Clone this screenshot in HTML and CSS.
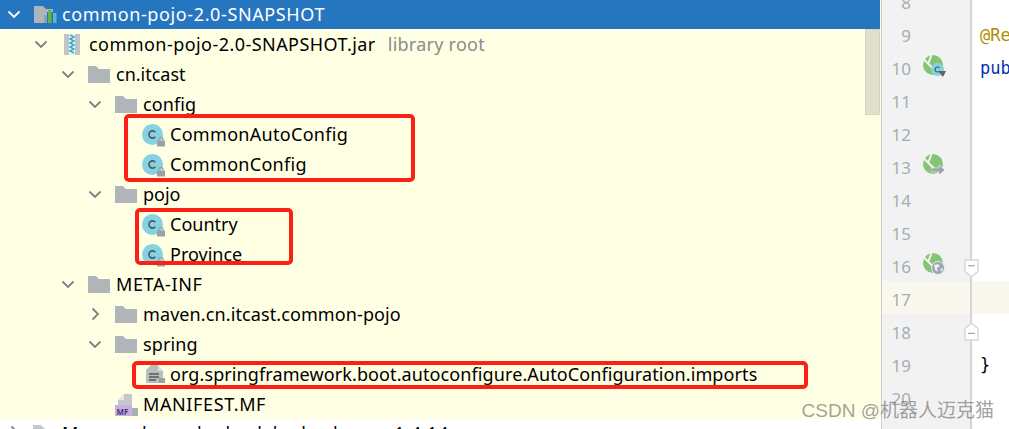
FILE: index.html
```html
<!DOCTYPE html>
<html lang="zh-CN">
<head>
    <meta charset="UTF-8">
    <title>common-pojo</title>
    <link rel="stylesheet" href="styles.css">
</head>
<body>
    <svg class="defs" width="0" height="0">
        <symbol id="folder" viewBox="0 0 22 17">
            <path d="M0 0h8l3 3h11v14H0z" fill="#afb5b8"/>
        </symbol>
        <symbol id="arrow-down" viewBox="0 0 14 14">
            <path d="M1.5 4.5 7 10l5.5-5.5" fill="none" stroke="currentColor" stroke-width="1.8"/>
        </symbol>
        <symbol id="arrow-right" viewBox="0 0 14 14">
            <path d="M4.5 1.5 10 7l-5.5 5.5" fill="none" stroke="currentColor" stroke-width="1.8"/>
        </symbol>
        <symbol id="class-lock" viewBox="0 0 24 24">
            <circle cx="10.5" cy="10.5" r="10.5" fill="#86d2e2"/>
            <path d="M13.3 8.2a3.6 3.6 0 1 0 0 4.6" fill="none" stroke="#4b5a63" stroke-width="1.6"/>
            <path d="M17 16.5v-1.2a2 2 0 0 1 4 0v1.2" fill="none" stroke="#9aa1a6" stroke-width="1.3"/>
            <rect x="15" y="16.5" width="8" height="6" fill="#9aa1a6"/>
        </symbol>
        <symbol id="spring" viewBox="0 0 20 20">
            <circle cx="10" cy="10" r="10" fill="#84c473"/>
            <path d="M0 3.500l13 13M8.500 0 5.500 8" fill="none" stroke="#f4f4f4" stroke-width="2"/>
        </symbol>
    </svg>

    <div class="window">
        <!-- 左侧项目树 -->
        <div class="tree">
            <div class="row selected lvl0">
                <svg class="arrow"><use href="#arrow-down"/></svg>
                <svg class="icon lib" viewBox="0 0 23 17">
                    <path d="M0 0h9l3 3h7v3h-6v11H0z" fill="#afb5b8"/>
                    <rect x="10" y="9" width="3" height="8" fill="#8fa3ad"/>
                    <rect x="14" y="4" width="3.500" height="13" fill="#62b543"/>
                    <rect x="19" y="7" width="3.500" height="10" fill="#5bb4d6"/>
                </svg>
                <span class="caps">common-pojo-2.0-SNAPSHOT</span>
            </div>
            <div class="row lvl1">
                <svg class="arrow"><use href="#arrow-down"/></svg>
                <svg class="icon jar" viewBox="0 0 16 21">
                    <rect width="16" height="21" fill="#c0c6c6"/>
                    <rect x="5" width="6" height="21" fill="#e9f5f5"/>
                    <path d="M6 1l4 2-4 2 4 2-4 2 4 2-4 2 4 2-4 2 4 2" fill="none" stroke="#3fa7c9" stroke-width="1.4"/>
                </svg>
                <span class="jar-name">common-pojo-2.0-SNAPSHOT.jar</span>
                <span class="hint">library root</span>
            </div>
            <div class="row lvl2">
                <svg class="arrow"><use href="#arrow-down"/></svg>
                <svg class="icon folder"><use href="#folder"/></svg>
                <span>cn.itcast</span>
            </div>
            <div class="row lvl3">
                <svg class="arrow"><use href="#arrow-down"/></svg>
                <svg class="icon folder"><use href="#folder"/></svg>
                <span class="lower">config</span>
            </div>
            <div class="row lvl4">
                <svg class="icon cls"><use href="#class-lock"/></svg>
                <span class="mixed">CommonAutoConfig</span>
            </div>
            <div class="row lvl4">
                <svg class="icon cls"><use href="#class-lock"/></svg>
                <span class="mixed">CommonConfig</span>
            </div>
            <div class="row lvl3">
                <svg class="arrow"><use href="#arrow-down"/></svg>
                <svg class="icon folder"><use href="#folder"/></svg>
                <span>pojo</span>
            </div>
            <div class="row lvl4">
                <svg class="icon cls"><use href="#class-lock"/></svg>
                <span>Country</span>
            </div>
            <div class="row lvl4">
                <svg class="icon cls"><use href="#class-lock"/></svg>
                <span>Province</span>
            </div>
            <div class="row lvl2">
                <svg class="arrow"><use href="#arrow-down"/></svg>
                <svg class="icon folder"><use href="#folder"/></svg>
                <span class="caps">META-INF</span>
            </div>
            <div class="row lvl3">
                <svg class="arrow"><use href="#arrow-right"/></svg>
                <svg class="icon folder"><use href="#folder"/></svg>
                <span class="lower">maven.cn.itcast.common-pojo</span>
            </div>
            <div class="row lvl3">
                <svg class="arrow"><use href="#arrow-down"/></svg>
                <svg class="icon folder"><use href="#folder"/></svg>
                <span class="lower">spring</span>
            </div>
            <div class="row lvl4">
                <svg class="icon imports" viewBox="0 0 19 18">
                    <path d="M5 0h7v6h5v12H0V5z" fill="#b9bdbe"/>
                    <path d="M12 0l5 6h-5z" fill="#d8dbdb"/>
                    <path d="M3 9h10M3 12h10M3 15h7" stroke="#53585c" stroke-width="1.500"/>
                    <rect x="13" y="13" width="6" height="5" fill="#9aa1a6"/>
                </svg>
                <span class="lower">org.springframework.boot.autoconfigure.AutoConfiguration.imports</span>
            </div>
            <div class="row lvl3">
                <svg class="icon manifest" viewBox="0 0 23 22">
                    <path d="M9 0h8v11H3V6z" fill="#c4c8c9"/>
                    <path d="M9 0v6H3z" fill="#e6e8e8"/>
                    <rect y="11" width="17" height="11" fill="#c7aee6"/>
                    <rect x="17" y="14" width="6" height="8" fill="#a9aeb2"/>
                    <text class="mf-label" x="1.500" y="20.500">MF</text>
                </svg>
                <span class="caps">MANIFEST.MF</span>
            </div>
            <div class="cut-row">
                <svg class="cut-arrow"><use href="#arrow-right"/></svg>
                <svg class="cut-file" viewBox="0 0 14 14"><path d="M0 0h8l6 6v8H0z" fill="#c4c8c9"/></svg>
                <span class="caps">Maven: ch.qos.logback:logback-core:1.4.14</span>
            </div>

            <div class="scroll-thumb"></div>
        </div>

        <!-- 行号栏 -->
        <div class="gutter">
            <div class="line">8</div>
            <div class="line">9</div>
            <div class="line">10
                <svg class="mark"><use href="#spring"/></svg>
                <svg class="mark-sub" viewBox="0 0 15 15">
                    <circle cx="6.500" cy="6.500" r="6.500" fill="#86d2e2"/>
                    <path d="M8.500 5a2.500 2.500 0 1 0 0 3" fill="none" stroke="#4b5a63" stroke-width="1.200"/>
                    <path d="M7 8h8l-3 6z" fill="#5f6468"/>
                </svg>
            </div>
            <div class="line">11</div>
            <div class="line">12</div>
            <div class="line">13
                <svg class="mark"><use href="#spring"/></svg>
                <svg class="mark-sub" viewBox="0 0 15 15">
                    <path d="M0 6h8V3l6 5-6 5v-3H0z" fill="#9aa7b0" stroke="#f2f2f2" stroke-width=".6"/>
                </svg>
            </div>
            <div class="line">14</div>
            <div class="line">15</div>
            <div class="line">16
                <svg class="mark"><use href="#spring"/></svg>
                <svg class="mark-sub" viewBox="0 0 15 15">
                    <circle cx="7" cy="7" r="6.500" fill="#9aa7b0" stroke="#e8eef2" stroke-width="1"/>
                    <path d="M3 4l4-1 2 2-3 2 1 4-3-2zM9 8l3-1-1 4z" fill="#e8eef2"/>
                </svg>
            </div>
            <div class="line current">17</div>
            <div class="line">18</div>
            <div class="line">19</div>
            <div class="line">20</div>
            <svg class="fold fold-open" viewBox="0 0 16 20">
                <path d="M1 1h14v12l-7 6-7-6z" fill="#fff" stroke="#d6d6d6" stroke-width="1.500"/>
                <path d="M4.500 7h7" stroke="#9a9a9a" stroke-width="1.200"/>
            </svg>
            <svg class="fold fold-close" viewBox="0 0 16 20">
                <path d="M1 19h14V7L8 1 1 7z" fill="#fff" stroke="#d6d6d6" stroke-width="1.500"/>
                <path d="M4.500 12h7" stroke="#9a9a9a" stroke-width="1.200"/>
            </svg>
        </div>

        <!-- 代码区 -->
        <div class="editor">
            <div class="line"></div>
            <div class="line"><span class="anno">@Re</span></div>
            <div class="line"><span class="kw">pub</span></div>
            <div class="line"></div>
            <div class="line"></div>
            <div class="line"></div>
            <div class="line"></div>
            <div class="line"></div>
            <div class="line"></div>
            <div class="line current"></div>
            <div class="line"></div>
            <div class="line">}</div>
            <div class="line"></div>
        </div>
    </div>

    <!-- 红框标注 -->
    <div class="red-box box-a"></div>
    <div class="red-box box-b"></div>
    <div class="red-box box-c"></div>

    <div class="watermark">CSDN @机器人迈克猫</div>
</body>
</html>
```

FILE: styles.css
```css
body {
    margin: 0;
    height: 429px;
    overflow: hidden;
    position: relative;
    background: #fff;
    font-family: "Noto Sans", "Noto Sans CJK SC", sans-serif;
}

.defs {
    position: absolute;
}

.window {
    display: flex;
    height: 429px;
    overflow: hidden;
}

/* 项目树 */
.tree {
    position: relative;
    width: 881px;
    flex: none;
    background: #ffffe4;
    font-size: 18px;
    color: #000;
}
.row {
    display: flex;
    align-items: center;
    height: 30px;
    white-space: nowrap;
    color: #000;
}
.selected {
    height: 29px;
    padding-bottom: 1px;
    box-sizing: border-box;
    background: #2675bf;
    color: #fff;
    margin-right: 1px;
}
.lvl0 { padding-left: 7px; }
.lvl1 { padding-left: 34px; }
.lvl2 { padding-left: 61px; }
.lvl3 { padding-left: 88px; }
.lvl4 { padding-left: 115px; }

.caps { letter-spacing: 0.62px; }
.jar-name { letter-spacing: 0.45px; }
.mixed { letter-spacing: 0.3px; }
.lower { letter-spacing: 0.1px; }

.arrow {
    width: 14px;
    height: 14px;
    flex: none;
    margin-right: 13px;
    color: #7c8184;
}
.selected .arrow {
    color: #fff;
}
.icon {
    flex: none;
    margin-right: 6px;
}
.lib { width: 23px; height: 17px; margin-right: 5px; }
.jar { width: 16px; height: 21px; margin-left: 3px; margin-right: 9px; }
.folder { width: 22px; height: 17px; }
.cls { width: 24px; height: 24px; margin-left: 27px; margin-right: 4px; margin-top: 4px; }
.imports { width: 19px; height: 18px; margin-left: 31px; margin-right: 5px; }
.manifest { width: 23px; height: 22px; margin-left: 27px; margin-right: 5px; margin-top: 2px; }
.mf-label {
    font-size: 8px;
    font-weight: 700;
    fill: #4a3a6a;
}
.hint {
    color: #8c8c8c;
    margin-left: 12px;
    letter-spacing: 0.25px;
}
.cut-row {
    position: absolute;
    top: 419px;
    left: 0;
    right: 0;
    height: 10px;
    overflow: hidden;
    padding-left: 7px;
    background: #fff;
    display: flex;
    align-items: flex-start;
    line-height: 18px;
    white-space: nowrap;
}
.cut-arrow {
    flex: none;
    width: 14px;
    height: 14px;
    margin-top: 6px;
    color: #7c8184;
}
.cut-file {
    flex: none;
    width: 14px;
    height: 14px;
    margin: 6px 0 0 12px;
}
.cut-row span {
    margin: 5px 0 0 15px;
}
.scroll-thumb {
    position: absolute;
    top: 29px;
    left: 865px;
    box-sizing: border-box;
    width: 15px;
    height: 86px;
    background: #e0e0cc;
    border: 1px solid #d4d4c0;
}

/* 行号栏 */
.gutter {
    position: relative;
    width: 88px;
    flex: none;
    margin-top: -16px;
    height: 445px;
    background: #f2f2f2;
    border-left: 1px solid #cdcdcd;
    border-right: 2px solid #d4d4d4;
    color: #a6adb3;
    font-size: 17px;
}
.line {
    position: relative;
    height: 33px;
    line-height: 37px;
}
.gutter .line {
    width: 29px;
    text-align: right;
}
.gutter .current {
    width: auto;
    background: #faf8ee;
    padding-right: 59px;
}
.mark {
    position: absolute;
    left: 41px;
    top: 5px;
    width: 20px;
    height: 20px;
}
.mark-sub {
    position: absolute;
    left: 49px;
    top: 13px;
    width: 15px;
    height: 15px;
}
.fold {
    position: absolute;
    left: 82px;
    width: 15px;
    height: 19px;
}
.fold-open { top: 275px; }
.fold-close { top: 338px; }

/* 代码区 */
.editor {
    flex: 1;
    margin-top: -16px;
    font-family: "DejaVu Sans Mono", monospace;
    font-size: 17px;
    color: #000;
}
.editor .line {
    padding-left: 8px;
}
.editor .current {
    background: #faf8ee;
}
.anno { color: #b08f00; }
.kw { color: #0033b3; }

/* 红框标注 */
.red-box {
    position: absolute;
    box-sizing: border-box;
    border: 4px solid #fc1f14;
    border-radius: 5px;
}
.box-a { left: 124px; top: 114px; width: 291px; height: 68px; }
.box-b { left: 135px; top: 208px; width: 158px; height: 57px; }
.box-c { left: 132px; top: 361px; width: 676px; height: 28px; }

.watermark {
    position: absolute;
    right: 15px;
    top: 395px;
    font-family: "Liberation Sans", "Noto Sans CJK SC", sans-serif;
    font-size: 19px;
    color: rgba(120,120,120,0.7);
}
```
